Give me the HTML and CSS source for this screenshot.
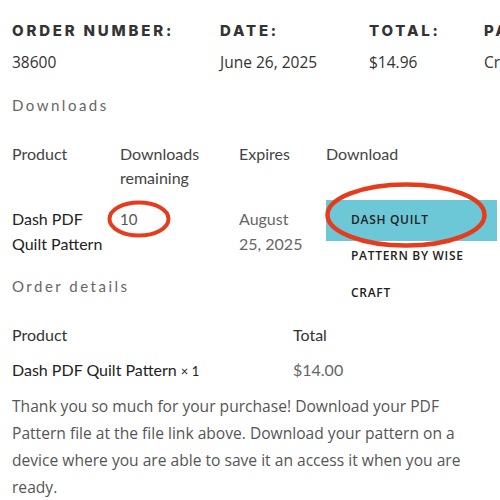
FILE: index.html
```html
<!DOCTYPE html>
<html>
<head>
<meta charset="utf-8">
<link rel="stylesheet" href="styles.css">
</head>
<body>
<div class="page">
  <ul class="overview">
    <li class="ov-item ov-1"><span class="ov-label">Order number:</span><span class="ov-value">38600</span></li>
    <li class="ov-item ov-2"><span class="ov-label">Date:</span><span class="ov-value">June 26, 2025</span></li>
    <li class="ov-item ov-3"><span class="ov-label">Total:</span><span class="ov-value">$14.96</span></li>
    <li class="ov-item ov-4"><span class="ov-label">Payment method:</span><span class="ov-value">Credit card</span></li>
  </ul>

  <h2 class="section-title st-downloads">Downloads</h2>

  <div class="dl-table">
    <div class="dl-head">Product</div>
    <div class="dl-head">Downloads remaining</div>
    <div class="dl-head">Expires</div>
    <div class="dl-head">Download</div>

    <div class="dl-cell dl-product">Dash PDF Quilt Pattern</div>
    <div class="dl-cell dl-remaining"><span class="circled">10<svg class="ring ring-small" viewBox="0 0 64 38" aria-hidden="true"><ellipse cx="32" cy="19" rx="29.5" ry="16.5" fill="none" stroke="#e63c1e" stroke-width="4"/></svg></span></div>
    <div class="dl-cell dl-expires">August 25, 2025</div>
    <div class="dl-cell dl-file">
      <a class="file-btn">DASH QUILT</a>
      <span class="file-rest">PATTERN BY WISE</span>
      <span class="file-rest">CRAFT</span>
      <svg class="ring ring-big" viewBox="0 0 162 66" aria-hidden="true"><ellipse cx="81" cy="33" rx="78.5" ry="30.5" fill="none" stroke="#e63c1e" stroke-width="4.5"/></svg>
    </div>
  </div>

  <h2 class="section-title st-details">Order details</h2>

  <div class="od-table">
    <div class="od-head">Product</div>
    <div class="od-head">Total</div>
    <div class="od-name">Dash PDF Quilt Pattern <strong class="qty">× 1</strong></div>
    <div class="od-total">$14.00</div>
  </div>

  <p class="note">Thank you so much for your purchase! Download your PDF Pattern file at the file link above. Download your pattern on a device where you are able to save it an access it when you are ready.</p>
</div>
</body>
</html>
```

FILE: styles.css
```css
html, body {
  margin: 0;
  padding: 0;
  background: #fff;
}
body {
  width: 500px;
  height: 500px;
  overflow: hidden;
}
.page {
  padding: 0 12px;
  width: 476px;
  font-family: "Lato", "Liberation Sans", sans-serif;
  color: #333;
}

/* overview */
.overview {
  list-style: none;
  margin: 0;
  padding: 22px 0 0;
  display: grid;
  grid-template-columns: 208px 149px 115px 200px;
  white-space: nowrap;
}
.ov-item {
  display: flex;
  flex-direction: column;
}
.ov-label {
  font-family: "Inter", "Liberation Sans", sans-serif;
  font-weight: 800;
  font-size: 15px;
  letter-spacing: 2.8px;
  text-transform: uppercase;
  color: #333;
  line-height: 18px;
}
.ov-value {
  font-family: "Open Sans", "Liberation Sans", sans-serif;
  font-size: 15.5px;
  color: #333;
  margin-top: 11px;
  line-height: 22px;
}

.section-title {
  margin: 0;
  font-family: "Lato", "Liberation Sans", sans-serif;
  font-weight: 400;
  font-size: 15px;
  letter-spacing: 2.5px;
  color: #666;
  line-height: 20px;
}
.st-downloads { margin-top: 22px; }

/* downloads table */
.dl-table {
  display: grid;
  grid-template-columns: 108px 119px 87px 171px;
  margin-top: 27px;
  font-size: 16px;
  color: #444;
  line-height: 24px;
}
.dl-head {
  padding-right: 8px;
}
.dl-cell {
  margin-top: 16px;
  line-height: 25px;
  padding-right: 6px;
}
.dl-product { color: #222; }
.dl-expires { color: #666; padding-right: 22px; }
.circled {
  position: relative;
  display: inline-block;
  color: #555;
  font-size: 15px;
}
.ring {
  position: absolute;
  pointer-events: none;
}
.ring-small {
  width: 64px;
  height: 38px;
  left: -13px;
  top: -7px;
}
.dl-file {
  position: relative;
  height: 45px;
  margin-top: 10px;
  padding-right: 0;
  font-family: "Open Sans", "Liberation Sans", sans-serif;
  font-size: 12px;
  font-weight: 600;
  letter-spacing: 0.7px;
  color: #222;
}
.file-btn {
  display: block;
  background: #6cc8d6;
  height: 41px;
  line-height: 39px;
  padding-left: 25px;
}
.file-rest {
  display: block;
  padding-left: 25px;
  line-height: 37px;
  margin-top: -4px;
}
.file-rest + .file-rest { margin-top: 0; }
.ring-big {
  width: 162px;
  height: 66px;
  left: -1px;
  top: -18px;
}

.st-details { margin-top: 20px; }

/* order details */
.od-table {
  display: grid;
  grid-template-columns: 281px 1fr;
  margin-top: 27px;
  font-size: 16px;
  color: #333;
  line-height: 24px;
  row-gap: 11px;
}
.od-name { color: #222; }
.qty { font-weight: 400; font-size: 13px; }
.od-total { color: #666; }

.note {
  margin: 10px 0 0;
  font-family: "Open Sans", "Liberation Sans", sans-serif;
  font-size: 15.6px;
  line-height: 27px;
  color: #555;
}
```
